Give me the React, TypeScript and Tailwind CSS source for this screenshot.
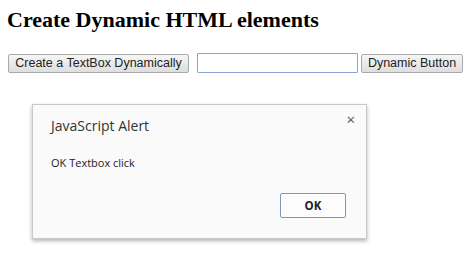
export default function App() {
  return (
    <div className="w-[474px] h-[259px] bg-white overflow-hidden">
      <h1 className="pl-[7px] pt-[8px] text-[22px] leading-[24px] font-bold text-black font-['Liberation_Serif',serif]">
        Create Dynamic HTML elements
      </h1>
      <div className="flex items-center pl-[8px] mt-[21px] font-['Liberation_Sans',Arial,sans-serif] text-[12.5px] text-[#222]">
        <button className="h-[19px] w-[181px] border border-[#a9a9a9] rounded-[2px] bg-gradient-to-b from-[#f6f6f6] to-[#dedede] leading-none">
          Create a TextBox Dynamically
        </button>
        <input className="ml-[8px] h-[20px] w-[161px] border border-[#8aa6d8] rounded-[1px] bg-white outline-none" />
        <button className="ml-[3px] h-[19px] w-[102px] border border-[#a9a9a9] rounded-[2px] bg-gradient-to-b from-[#f6f6f6] to-[#dedede] leading-none">
          Dynamic Button
        </button>
      </div>
      <div className="ml-[32px] mt-[31px] w-[335px] h-[135px] bg-[#fafafa] border border-[#c9c9c9] shadow-[0_2px_4px_rgba(0,0,0,0.3)] relative flex flex-col font-['Open_Sans','Noto_Sans',sans-serif] text-[#333]">
        <span className="absolute right-[11px] top-[7px] text-[15px] leading-none text-[#555]">×</span>
        <div className="pl-[18px] pt-[11px] text-[14px] leading-[19px] text-[#333]">JavaScript Alert</div>
        <div className="pl-[18px] pt-[21px] text-[11px] leading-[14px] text-[#222]">OK Textbox click</div>
        <div className="flex justify-end pr-[20px] mt-auto pb-[20px]">
          <button className="w-[66px] h-[25px] border border-[#7d96bb] rounded-[2px] bg-[#fcfcfc] text-[11.5px] font-bold text-[#222]">
            OK
          </button>
        </div>
      </div>
    </div>
  );
}
